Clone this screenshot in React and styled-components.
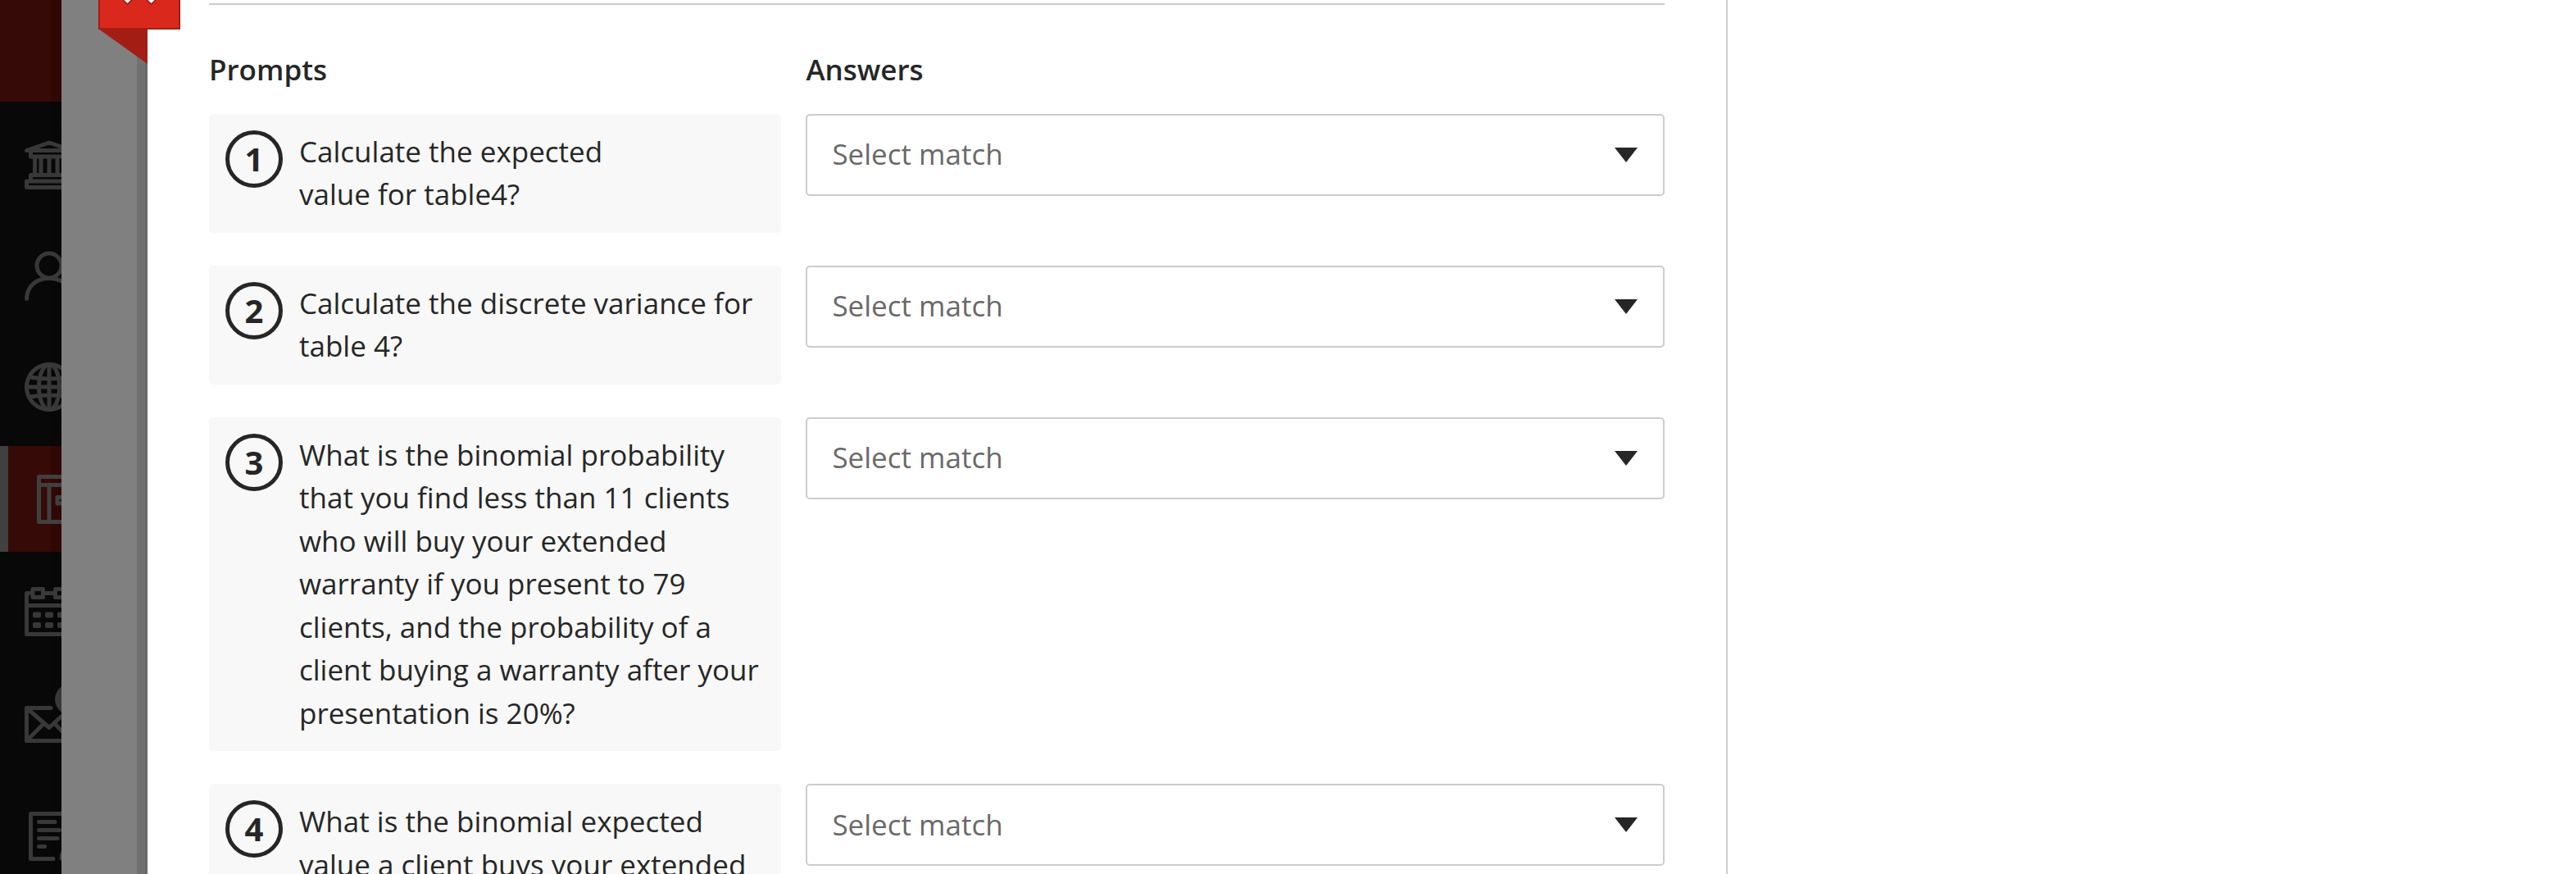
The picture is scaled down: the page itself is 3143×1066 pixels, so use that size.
import React from "react";
import styled, { createGlobalStyle, css } from "styled-components";

const GlobalStyle = createGlobalStyle`
  *, *::before, *::after { box-sizing: border-box; }
  body {
    margin: 0;
    background: #fff;
    color: #262626;
    font-family: "Open Sans", "Noto Sans", sans-serif;
    font-size: 35px;
    line-height: 1.5;
  }
`;

const Shell = styled.div`
  display: flex;
  height: 100vh;
  overflow: hidden;
`;

const Sidebar = styled.nav`
  flex: none;
  width: 75px;
  overflow: hidden;
  background: linear-gradient(to right, transparent 62px, rgba(0, 0, 0, 0.12) 62px), #080808;
`;

const Brand = styled.div`
  height: 124px;
  margin-bottom: 12px;
  background: linear-gradient(to right, #360a07 62px, #2f0806 62px);
`;

const NavLink = styled.a`
  display: flex;
  align-items: center;
  width: 150px;
  height: 129px;
  margin-bottom: 7px;
  padding-left: 30px;
  color: #383838;
  ${(p) =>
    p.$active &&
    css`
      padding-left: 20px;
      border-left: 10px solid #404040;
      background: linear-gradient(to right, #360a07 52px, #2f0806 52px);
      color: #404040;
    `}
`;

const Icon = styled.svg`
  flex: none;
  width: 60px;
  height: 70px;
  fill: none;
  stroke: currentColor;
  stroke-width: 5;
  stroke-linecap: round;
  stroke-linejoin: round;
`;

const Backdrop = styled.div`
  flex: none;
  width: 105px;
  background: linear-gradient(
    to right,
    #808080 92px,
    #707070 92px,
    #707070 102px,
    #696969 102px
  );
`;

const Panel = styled.main`
  position: relative;
  flex: 1;
  display: flex;
  min-width: 0;
  background: #fff;
`;

const Ribbon = styled.svg`
  position: absolute;
  top: 0;
  left: -60px;
  width: 100px;
  height: 78px;
`;

const Question = styled.section`
  flex: 0 1 1928px;
  padding: 4px 75px 0;
  border-right: 2px solid #ccc;
`;

const Divider = styled.hr`
  height: 2px;
  margin: 0 0 53px;
  border: 0;
  background: #ccc;
`;

const Row = styled.div`
  display: grid;
  grid-template-columns: 2fr 3fr;
  gap: 30px;
  align-items: start;
  margin-bottom: 40px;
`;

const Headings = styled(Row)`
  margin-bottom: 27px;
`;

const Heading = styled.h2`
  margin: 0;
  font-size: 35px;
  font-weight: 600;
`;

const Prompt = styled.div`
  display: flex;
  align-items: flex-start;
  gap: 20px;
  padding: 20px;
  border-radius: 5px;
  background: #f8f8f8;
`;

const Badge = styled.span`
  flex: none;
  display: flex;
  align-items: center;
  justify-content: center;
  width: 70px;
  height: 70px;
  border: 5px solid #262626;
  border-radius: 50%;
  font-size: 40px;
  font-weight: 700;
  line-height: 1;
`;

const PromptText = styled.label`
  min-width: 0;
`;

const SelectBox = styled.div`
  position: relative;
`;

const Select = styled.select`
  display: block;
  width: 100%;
  height: 100px;
  padding: 0 80px 0 30px;
  border: 2px solid #ccc;
  border-radius: 5px;
  appearance: none;
  background: #fff;
  color: #696969;
  font: inherit;
`;

const Arrow = styled.svg`
  position: absolute;
  top: 41px;
  right: 33px;
  width: 28px;
  height: 18px;
  fill: #262626;
  pointer-events: none;
`;

const prompts = [
  "Calculate the expected value\u00a0for\u00a0table4?",
  "Calculate the discrete variance for table 4?",
  "What is the binomial probability that you find less than 11 clients who will buy your extended warranty if you present to 79 clients, and the probability of a client buying a warranty after your presentation is 20%?",
  "What is the binomial expected value a client buys your extended",
];

const navItems = [
  {
    label: "Institution",
    art: (
      <path d="M2.5 17.5 30 8l27.5 9.5zM7.5 17.5V25h45v-7.500M12.500 25v22.500M20 25v22.500M30 25v22.500M40 25v22.500M47.500 25v22.500M7.500 55v-7.500h45V55M2.500 55h55v7.500h-55z" />
    ),
  },
  {
    label: "Profile",
    art: (
      <>
        <circle cx="30" cy="22" r="15" />
        <path d="M2.500 62.500C3 46 15 37.500 30 37.500S57 46 57.500 62.500" />
      </>
    ),
  },
  {
    label: "Activity",
    art: (
      <>
        <circle cx="30" cy="34" r="27.500" />
        <ellipse cx="30" cy="34" rx="12.500" ry="27.500" />
        <path d="M30 6.500v55M2.500 34h55M6 22q24 4 48 0M6 46q24-4 48 0" />
      </>
    ),
  },
  {
    label: "Courses",
    active: true,
    art: (
      <path d="M17.500 7.500h45v55h-45zM17.500 17.500h45M30 17.500v45M40 32.500h15v7.500H40z" />
    ),
  },
  {
    label: "Calendar",
    art: (
      <>
        <path d="M9 13.500H2.500v50h55v-50H51M25 13.500h10M2.500 28.500h55M10 8.500h12.500v10H10zM37.500 8.500H50v10H37.500z" />
        <path
          fill="currentColor"
          strokeWidth="4"
          d="M12 38.500h6v3h-6zM27 38.500h6v3h-6zM42 38.500h6v3h-6zM12 51h6v3h-6zM27 51h6v3h-6zM42 51h6v3h-6z"
        />
      </>
    ),
  },
  {
    label: "Messages",
    art: (
      <>
        <path d="M32 17.500H2.500v40h55v-20M2.500 17.500 30 41.500l14-13M2.500 57.500l20-20M57.500 57.500l-20-20" />
        <circle cx="56" cy="7" r="19" fill="currentColor" stroke="none" />
      </>
    ),
  },
  {
    label: "Grades",
    art: (
      <path d="M35 65.500H7.500v-55h45v20M17.500 20.500H37M17.500 30.500h25M17.500 40.500H40M17.500 50.500h7M45 65q0-6 3-10" />
    ),
  },
];

export default function App() {
  return (
    <Shell>
      <GlobalStyle />
      <Sidebar>
        <Brand />
        {navItems.map((item) => (
          <NavLink key={item.label} href="#" aria-label={item.label} $active={item.active}>
            <Icon viewBox="0 0 60 70" overflow="visible" aria-hidden="true">
              {item.art}
            </Icon>
          </NavLink>
        ))}
      </Sidebar>
      <Backdrop />
      <Panel>
        <Ribbon viewBox="0 0 100 78" aria-hidden="true">
          <path d="M0 35h60v43z" fill="#a31d15" />
          <path d="M0 0h100v36H0z" fill="#a31d15" />
          <path d="M2 0h96v34H2z" fill="#da291c" />
          <path d="M29 0h13l-6.500 6.500zM58 0h13l-6.500 6.500z" fill="#a31d15" />
          <path d="M31.500 0h8l-4 4zM60.500 0h8l-4 4z" fill="#fff" />
        </Ribbon>
        <Question>
          <Divider />
          <Headings>
            <Heading>Prompts</Heading>
            <Heading>Answers</Heading>
          </Headings>
          {prompts.map((text, i) => (
            <Row key={text}>
              <Prompt>
                <Badge>{i + 1}</Badge>
                <PromptText htmlFor={`match-${i + 1}`}>{text}</PromptText>
              </Prompt>
              <SelectBox>
                <Select id={`match-${i + 1}`} defaultValue="">
                  <option value="">Select match</option>
                </Select>
                <Arrow viewBox="0 0 28 18" aria-hidden="true">
                  <path d="M0 0h28L14 18z" />
                </Arrow>
              </SelectBox>
            </Row>
          ))}
        </Question>
      </Panel>
    </Shell>
  );
}
